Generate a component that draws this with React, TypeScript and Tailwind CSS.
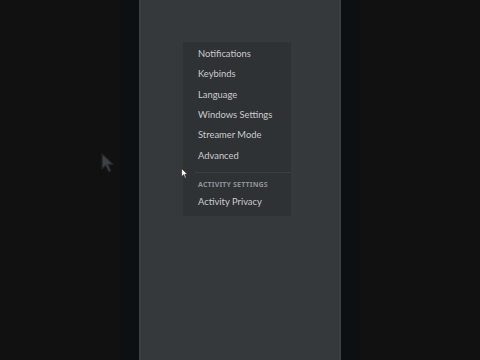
const items = ['Notifications', 'Keybinds', 'Language', 'Windows Settings', 'Streamer Mode', 'Advanced'];

const Cursor = ({ className, fill, stroke }: { className: string; fill: string; stroke: string }) => (
    <svg viewBox="0 0 12 19" className={className}>
        <path d="M1 1 L1 15 L4.5 11.5 L7 17.5 L9 16.6 L6.6 10.8 L11.2 10.8 Z" fill={fill} stroke={stroke} strokeWidth="1" strokeLinejoin="round" />
    </svg>
);

const App = () => {
    return (
        <div className="relative w-[480px] h-[360px] flex bg-[#111111] overflow-hidden" style={{ fontFamily: '"Noto Sans", "Open Sans", sans-serif' }}>
            <div className="w-[120px] h-full" />
            <div className="w-[19px] h-full bg-[#0c1013]" />
            {/* settings column */}
            <div className="w-[202px] h-full bg-[#36393c] border-x-2 border-[#3c4043] pl-[42px] pt-[42px]">
                <div className="w-[108px] bg-[#2f3235] pt-[2px] pb-[4px]">
                    {items.map((item) => (
                        <div key={item} className="h-[20.3px] flex items-center pl-[15px] font-['Lato'] text-[9.4px] text-[#cacbcd]">
                            {item}
                        </div>
                    ))}
                    <div className="mt-[6px] ml-[12px] h-px bg-[#3b3e42]" />
                    <div className="mt-[7px] h-[10px] flex items-center pl-[15px] text-[7px] font-bold tracking-wide text-[#8e9297]">
                        ACTIVITY SETTINGS
                    </div>
                    <div className="mt-[2px] h-[20px] flex items-center pl-[15px] font-['Lato'] text-[9.4px] text-[#cacbcd]">
                        Activity Privacy
                    </div>
                </div>
            </div>
            <div className="w-[19px] h-full bg-[#0c1013]" />
            <div className="flex-1 h-full" />
            {/* cursors over the page */}
            <Cursor className="absolute left-[101px] top-[152px] w-[13px] h-[22px] opacity-80" fill="#4a4d50" stroke="#2a2c2e" />
            <Cursor className="absolute left-[181px] top-[168px] w-[7px] h-[11px]" fill="#ffffff" stroke="#111111" />
        </div>
    );
};

export default App;
